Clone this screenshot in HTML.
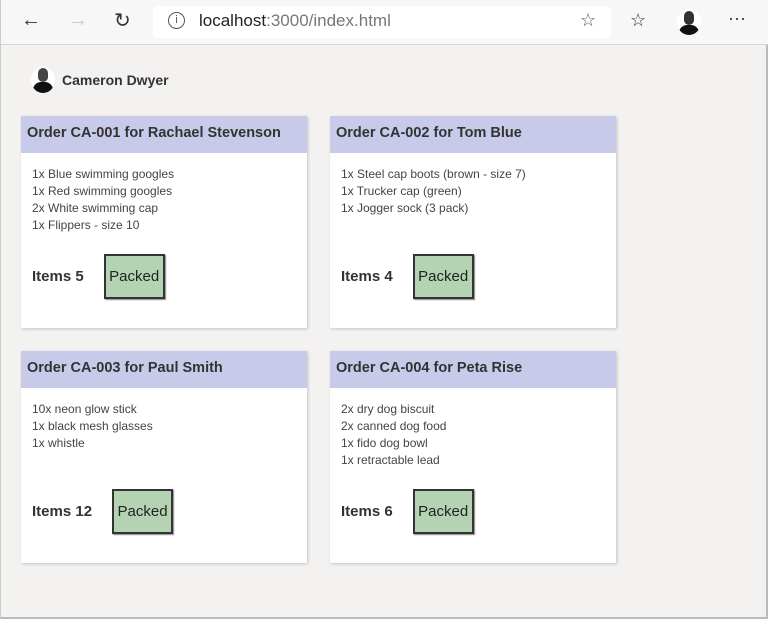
<!DOCTYPE html>
<html><head><style>
*{box-sizing:border-box;margin:0;padding:0}
body{width:768px;height:619px;background:#f3f2f1;font-family:"Liberation Sans",sans-serif;position:relative;overflow:hidden;border-left:1px solid #ccc;border-right:2px solid #bbb;border-bottom:2px solid #bbb}
.bar{position:absolute;left:0;top:0;width:768px;height:45px;background:#f7f7f7;border-bottom:1px solid #d6d6d6}
.addr{position:absolute;left:152px;top:6px;width:458px;height:32px;background:#fff;border-radius:4px}
.url{position:absolute;left:198px;top:11px;font-size:17px;color:#222}
.url span{color:#777}
.ic{position:absolute;font-size:20px;color:#333}
.card{position:absolute;width:286px;height:212px;background:#fff;box-shadow:1px 1px 3px rgba(0,0,0,.2)}
.hd{height:37px;background:#c8cae9;font-weight:bold;font-size:14.5px;color:#333;padding:9px 6px}
.items{padding:13px 11px;font-size:12px;line-height:17px;color:#444;height:96px}
.ft{display:flex;align-items:center;padding-left:11px;margin-top:5px}
.ft b{font-size:15px;color:#333}
.btn{margin-left:20px;width:61px;height:45px;background:#b3d3b3;border:2px solid #333;font-size:15px;color:#222;display:flex;align-items:center;justify-content:center;box-shadow:1px 1px 1px #888}
.av{position:absolute;border-radius:50%;background:#fff;overflow:hidden}
</style></head><body>
<div class="bar">
<div class="ic" style="left:20px;top:9px">&#8592;</div>
<div class="ic" style="left:67px;top:9px;color:#ccc">&#8594;</div>
<div class="ic" style="left:113px;top:8px">&#8635;</div>
<div class="addr"></div>
<div class="ic" style="left:167px;top:12px;color:#555;border:1.5px solid #555;border-radius:50%;width:17px;height:17px;line-height:14px;text-align:center;font-size:11px">i</div>
<div class="url">localhost<span>:3000/index.html</span></div>
<div class="ic" style="left:579px;top:10px;font-size:18px;color:#555">&#9734;</div>
<div class="ic" style="left:629px;top:10px;font-size:18px">&#9734;</div>
<div class="av" style="left:676px;top:9px;width:24px;height:26px"><div style="position:absolute;left:7px;top:2px;width:10px;height:14px;background:#333;border-radius:5px"></div><div style="position:absolute;left:2px;top:16px;width:20px;height:12px;background:#111;border-radius:8px 8px 0 0"></div></div>
<div class="ic" style="left:727px;top:8px;font-size:18px">&middot;&middot;&middot;</div>
</div>
<div class="av" style="left:30px;top:67px;width:24px;height:26px"><div style="position:absolute;left:7px;top:1px;width:10px;height:14px;background:#444;border-radius:5px"></div><div style="position:absolute;left:2px;top:15px;width:20px;height:12px;background:#111;border-radius:8px 8px 0 0"></div></div>
<div style="position:absolute;left:61px;top:72px;font-size:14px;font-weight:bold;color:#333">Cameron Dwyer</div>

<div class="card" style="left:20px;top:116px"><div class="hd">Order CA-001 for Rachael Stevenson</div><div class="items">1x Blue swimming googles<br>1x Red swimming googles<br>2x White swimming cap<br>1x Flippers - size 10</div><div class="ft"><b>Items 5</b><div class="btn">Packed</div></div></div>
<div class="card" style="left:329px;top:116px"><div class="hd">Order CA-002 for Tom Blue</div><div class="items">1x Steel cap boots (brown - size 7)<br>1x Trucker cap (green)<br>1x Jogger sock (3 pack)</div><div class="ft"><b>Items 4</b><div class="btn">Packed</div></div></div>
<div class="card" style="left:20px;top:351px"><div class="hd">Order CA-003 for Paul Smith</div><div class="items">10x neon glow stick<br>1x black mesh glasses<br>1x whistle</div><div class="ft"><b>Items 12</b><div class="btn">Packed</div></div></div>
<div class="card" style="left:329px;top:351px"><div class="hd">Order CA-004 for Peta Rise</div><div class="items">2x dry dog biscuit<br>2x canned dog food<br>1x fido dog bowl<br>1x retractable lead</div><div class="ft"><b>Items 6</b><div class="btn">Packed</div></div></div>
</body></html>
